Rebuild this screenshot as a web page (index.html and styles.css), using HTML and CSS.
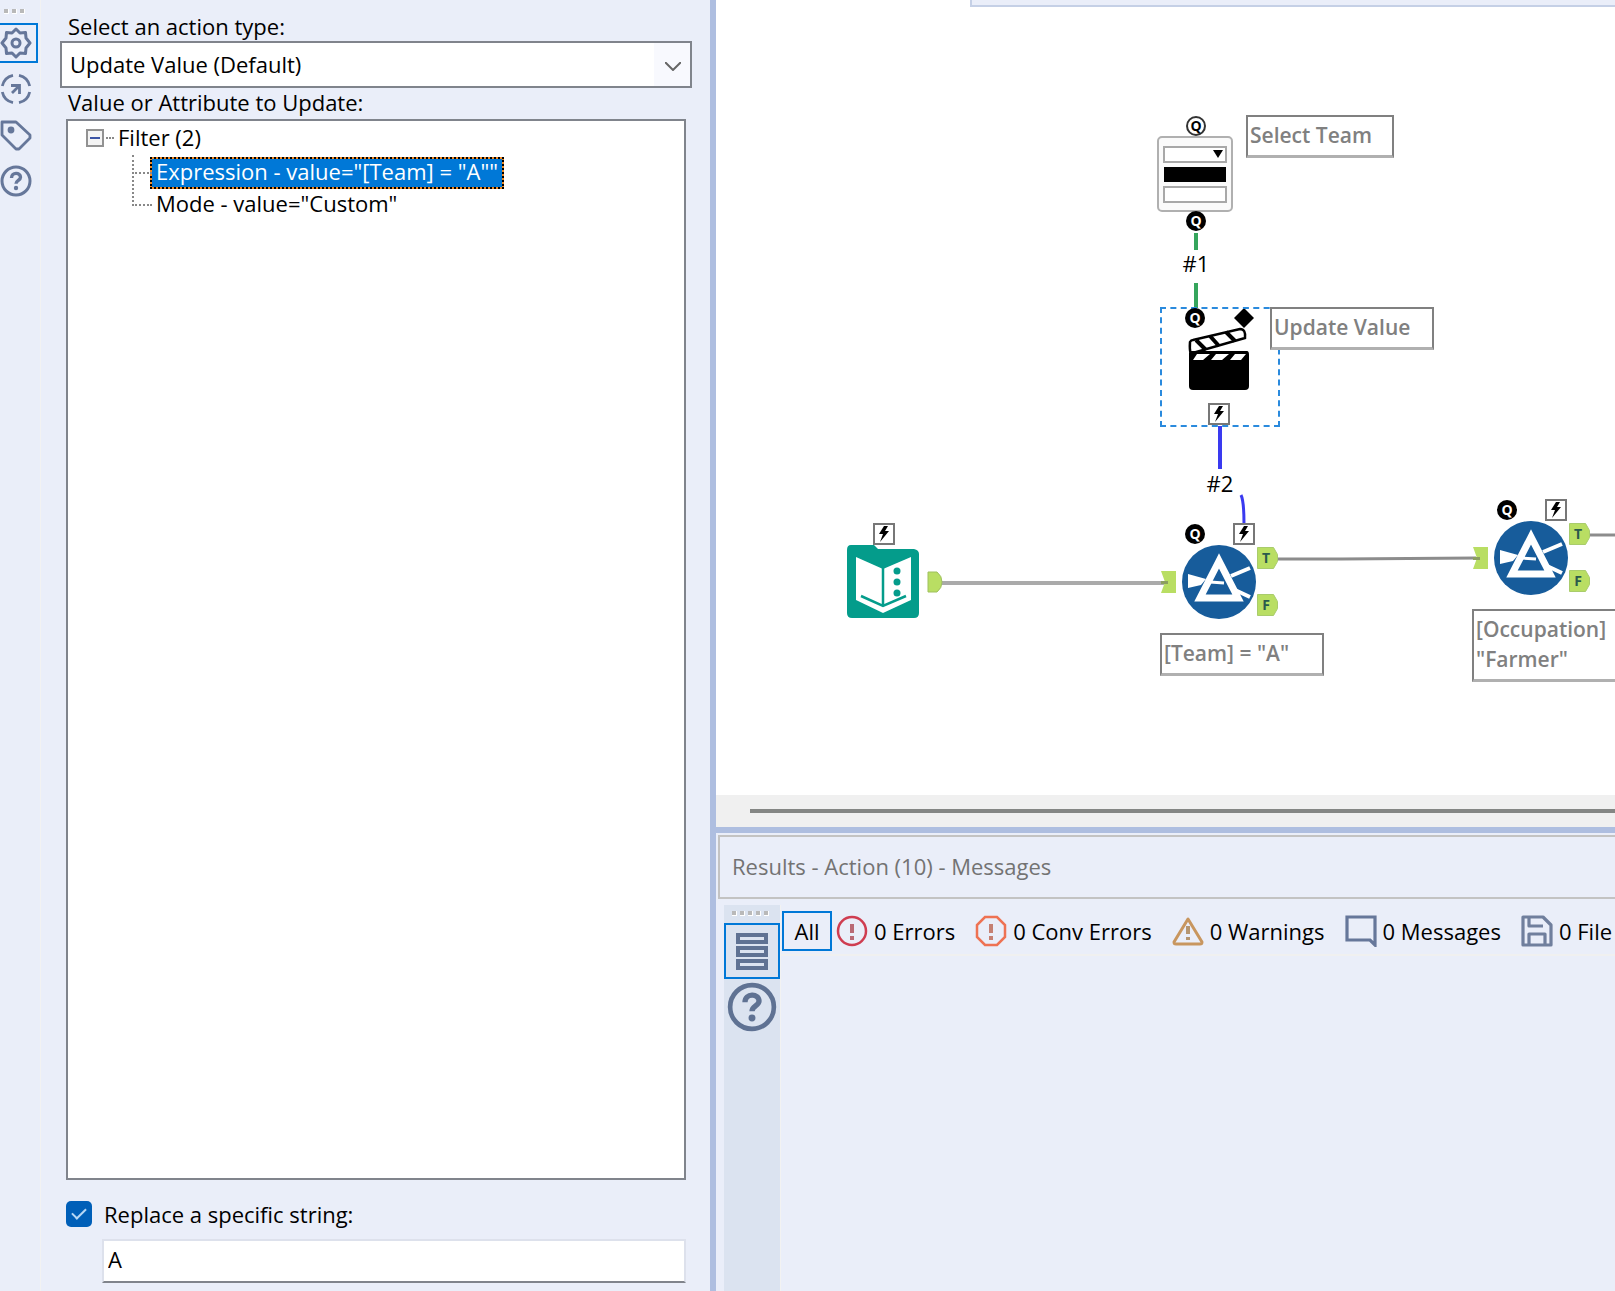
FILE: index.html
```html
<!DOCTYPE html>
<html lang="en">
<head>
<meta charset="utf-8">
<meta name="viewport" content="width=device-width, initial-scale=1">
<title>Workflow designer</title>
<link rel="stylesheet" href="styles.css">
</head>
<body>
<svg class="defs" aria-hidden="true">
  <symbol id="bolt" viewBox="0 0 22 22">
    <rect x="1" y="1" width="20" height="20" fill="#fff" stroke="#777" stroke-width="2"/>
    <path d="M11 3h4l-3 5h4l-9 11 3-8H6z" fill="#000"/>
  </symbol>
  <symbol id="in" viewBox="0 0 15 22">
    <path d="M0 0h15v22H0l4-11z" fill="#b9de63"/>
    <path d="M0 10h7v3H0z" fill="#8b9e60"/>
  </symbol>
  <symbol id="out" viewBox="0 0 21 22">
    <path d="M.5 .5h16l4 7v7l-4 7H.5z" fill="#b9de63" stroke="#a9cc6c"/>
  </symbol>
  <symbol id="prism" viewBox="0 0 74 74">
    <circle cx="37" cy="37" r="37" fill="#175c9b"/>
    <path d="M6 29l18 5-5 6-13 3z" fill="#fff"/>
    <path d="M49 31l19-8M53 45l15 7" stroke="#fff" stroke-width="4" fill="none"/>
    <path d="M37 16L18 53h38z" fill="none" stroke="#fff" stroke-width="7"/>
    <path d="M28 37l14 1" stroke="#fff" stroke-width="3"/>
  </symbol>
  <symbol id="help" viewBox="0 0 32 32">
    <circle cx="16" cy="16" r="14" fill="none" stroke="currentColor" stroke-width="3"/>
    <path d="M11.500 13c0-6 9-6 9-.8 0 3-4.500 3.300-4.500 6.500" fill="none" stroke="currentColor" stroke-width="3.400"/>
    <circle cx="16" cy="23" r="2.200" fill="currentColor"/>
  </symbol>
</svg>

<div class="app">
  <aside class="dock">
    <nav class="rail" aria-label="Configuration views">
      <span class="grip"><i></i><i></i><i></i></span>
      <button class="rail-btn is-active" aria-label="Configuration">
        <svg viewBox="0 0 32 32"><path d="M16 2l4 4 5.500-.5.500 5.500 4 5-4 5-.5 5.500-5.500-.5-4 4-4-4-5.500.5L6 21l-4-5 4-5 .5-5.500L12 6z" fill="none" stroke="currentColor" stroke-width="3" stroke-linejoin="round"/><circle cx="16" cy="16" r="4" fill="none" stroke="currentColor" stroke-width="3"/></svg>
      </button>
      <button class="rail-btn" aria-label="Navigation">
        <svg viewBox="0 0 32 32"><path d="M19 2.300A14 14 0 0 1 29.700 13M29.700 19A14 14 0 0 1 19 29.700M13 29.700A14 14 0 0 1 2.300 19M2.300 13A14 14 0 0 1 13 2.300M11 12.500h8.500V21M19 13L12 20" fill="none" stroke="currentColor" stroke-width="2.800"/></svg>
      </button>
      <button class="rail-btn" aria-label="Annotation">
        <svg viewBox="0 0 32 32"><path d="M2 3h14l14 13v3L19 30h-3L2 16z" fill="none" stroke="currentColor" stroke-width="2.800" stroke-linejoin="round"/><circle cx="11" cy="11" r="3.400" fill="currentColor"/></svg>
      </button>
      <button class="rail-btn" aria-label="Help"><svg><use href="#help"/></svg></button>
    </nav>
    <section class="config">
      <label class="field-label" for="action">Select an action type:</label>
      <div class="combo">
        <select id="action"><option>Update Value (Default)</option></select>
        <span class="combo-arrow"><svg viewBox="0 0 16 9"><path d="M0 0l8 8 8-8" fill="none" stroke="#666" stroke-width="2"/></svg></span>
      </div>
      <p class="field-label" id="tree-label">Value or Attribute to Update:</p>
      <div class="tree" role="tree" aria-labelledby="tree-label">
        <div class="tree-root" role="treeitem" aria-expanded="true"><button class="toggle" aria-label="Collapse"></button><span>Filter (2)</span></div>
        <div class="tree-children" role="group">
          <div class="tree-item" role="treeitem" aria-selected="true"><span class="tree-text is-selected">Expression - value="[Team] = "A""</span></div>
          <div class="tree-item" role="treeitem"><span class="tree-text">Mode - value="Custom"</span></div>
        </div>
      </div>
      <label class="check"><input type="checkbox" checked>Replace a specific string:</label>
      <input class="text" type="text" value="A" aria-label="String to replace">
    </section>
  </aside>

  <main class="work">
    <div class="canvas">
      <div class="tabs"></div>
      <svg class="wires" width="900" height="700" aria-hidden="true">
        <g fill="none">
          <path d="M226 583H448" stroke="#aaa" stroke-width="4"/>
          <path d="M561 559H625L760 558" stroke="#8c8c8c" stroke-width="3"/>
          <path d="M873 535H900" stroke="#8c8c8c" stroke-width="3"/>
          <path d="M480 233V250M480 283V308" stroke="#35a55c" stroke-width="4"/>
          <path d="M504 426V469" stroke="#3a3af0" stroke-width="4"/>
          <path d="M525 495Q528 501 528 524" stroke="#3a3af0" stroke-width="3"/>
        </g>
      </svg>
      <span class="wire-tag tag-1">#1</span>
      <span class="wire-tag tag-2">#2</span>

      <div class="node node-list">
        <svg width="76" height="76" viewBox="0 0 76 76">
          <rect x="1" y="1" width="74" height="74" rx="4" fill="#fafafa" stroke="#b0b0b0" stroke-width="2"/>
          <rect x="7" y="11" width="62" height="15" fill="#fff" stroke="#a8a8a8" stroke-width="2"/>
          <path d="M56 14h10l-5 8z"/>
          <path d="M7 31h62v15H7z"/>
          <rect x="7" y="51" width="62" height="15" fill="#fff" stroke="#a8a8a8" stroke-width="2"/>
        </svg>
        <span class="q q-open q-top">Q</span>
        <span class="q q-bottom">Q</span>
      </div>
      <div class="note note-list">Select Team</div>

      <div class="node node-action">
        <span class="q q-action">Q</span>
        <svg width="119" height="119" viewBox="0 0 119 119">
          <path d="M84 1l10 10-10 10-10-10z"/>
          <path d="M30 35q1-2 3-2L80 22q6 0 5 9L36 45l-2 6q-5-2-4-16z" fill="#fff" stroke="#000" stroke-width="2.500"/>
          <path d="M36 33l10 10M50 29l9 10M66 25l9 9" stroke="#000" stroke-width="4"/>
          <path d="M31 44h56q2 0 2 4v31q0 4-4 4H33q-4 0-4-4V46z"/>
          <path d="M37 47h13l-7 6H33zM56 47h13l-7 6H51zM75 47h11l-5 6H70z" fill="#fff"/>
          <use href="#bolt" x="48" y="96" width="22" height="22"/>
        </svg>
      </div>
      <div class="note note-action">Update Value</div>

      <div class="node node-input">
        <svg width="96" height="95" viewBox="0 0 96 95">
          <use href="#bolt" x="26" y="0" width="22" height="22"/>
          <path d="M4 22h23l4 4h36q5 1 5 5v59q0 5-5 5H5q-5 0-5-5V27q0-5 4-5z" fill="#049c8b"/>
          <path d="M9 34l27 12 28-12v43L36 90 9 77z" fill="#fff"/>
          <path d="M36 45v38M14 73l22 10 23-10" fill="none" stroke="#049c8b" stroke-width="2.500"/>
          <g fill="#049c8b"><circle cx="50" cy="48" r="3.500"/><circle cx="50" cy="59" r="3.500"/><circle cx="50" cy="70" r="3.500"/></g>
          <path d="M81 49h9q5 4 5 10t-5 10h-9z" fill="#b9de63" stroke="#9fc05f"/>
        </svg>
      </div>

      <div class="node filter filter-team">
        <svg width="118" height="96" viewBox="0 0 118 96">
          <use href="#bolt" x="73" y="0" width="22" height="22"/>
          <use href="#in" x="1" y="48" width="15" height="22"/>
          <use href="#prism" x="22" y="22" width="74" height="74"/>
          <use href="#out" x="97" y="24" width="21" height="22"/>
          <use href="#out" x="97" y="71" width="21" height="22"/>
        </svg>
        <span class="q q-filter">Q</span><b class="port port-t">T</b><b class="port port-f">F</b>
      </div>
      <div class="note note-team">[Team] = "A"</div>

      <div class="node filter filter-job">
        <svg width="118" height="96" viewBox="0 0 118 96">
          <use href="#bolt" x="73" y="0" width="22" height="22"/>
          <use href="#in" x="1" y="48" width="15" height="22"/>
          <use href="#prism" x="22" y="22" width="74" height="74"/>
          <use href="#out" x="97" y="24" width="21" height="22"/>
          <use href="#out" x="97" y="71" width="21" height="22"/>
        </svg>
        <span class="q q-filter">Q</span><b class="port port-t">T</b><b class="port port-f">F</b>
      </div>
      <div class="note note-job">[Occupation]<br>"Farmer"</div>
    </div>
    <div class="scroll"><span class="thumb"></span></div>

    <section class="results">
      <h2 class="results-title">Results - Action (10) - Messages</h2>
      <div class="results-body">
        <nav class="side" aria-label="Results views">
          <span class="grip"><i></i><i></i><i></i><i></i><i></i></span>
          <button class="side-btn is-active" aria-label="Messages">
            <svg width="32" height="38" viewBox="0 0 32 38"><path d="M2 3h28v7H2zM2 16h28v7H2zM2 29h28v7H2z" fill="none" stroke="currentColor" stroke-width="4"/></svg>
          </button>
          <button class="side-btn" aria-label="Help"><svg width="50" height="50"><use href="#help"/></svg></button>
        </nav>
        <div class="messages">
          <div class="filters">
            <button class="all">All</button>
            <button class="stat"><svg viewBox="0 0 32 32"><circle cx="16" cy="16" r="14" fill="none" stroke="#cf3d51" stroke-width="2.500"/><path d="M16 9v9M16 21v4" stroke="#b96a75" stroke-width="4"/></svg>0 Errors</button>
            <button class="stat"><svg viewBox="0 0 32 32"><path d="M10 2h12l8 8v12l-8 8H10l-8-8V10z" fill="none" stroke="#ee7253" stroke-width="2.500"/><path d="M16 9v9M16 21v4" stroke="#c58072" stroke-width="4"/></svg>0 Conv Errors</button>
            <button class="stat"><svg viewBox="0 0 32 32"><path d="M16 4L2 27q0 2 2 2h24q2 0 2-2z" fill="none" stroke="#c8965f" stroke-width="3" stroke-linejoin="round"/><path d="M16 11v8M16 22v3" stroke="#b59570" stroke-width="4"/></svg>0 Warnings</button>
            <button class="stat"><svg viewBox="0 0 32 32"><path d="M2 2h28v28l-5-5H2z" fill="none" stroke="#66779a" stroke-width="3.200"/></svg>0 Messages</button>
            <button class="stat"><svg viewBox="0 0 32 32"><path d="M2 2h20l8 8v20H2zM8 30V19h16v11M8 2v9h14" fill="none" stroke="#707f9d" stroke-width="3.200" stroke-linejoin="round"/></svg>0 File</button>
          </div>
        </div>
      </div>
    </section>
  </main>
</div>
</body>
</html>
```
FILE: styles.css
```css
* { box-sizing: border-box; }

body {
  margin: 0;
  background: #eaeef9;
  color: #000;
  font: 22px/28px "Open Sans", "Noto Sans", sans-serif;
}

button, input, select { font: inherit; color: inherit; }
button { margin: 0; padding: 0; border: 0; background: none; }
svg { display: block; }
.defs { position: absolute; width: 0; height: 0; }

.app { display: flex; height: 100vh; overflow: hidden; }

/* Configuration dock */
.dock { flex: 0 0 716px; display: flex; border-right: 6px solid #aebee0; }
.rail {
  flex: 0 0 41px;
  display: flex;
  flex-direction: column;
  align-items: flex-start;
  gap: 6px;
  padding-top: 9px;
  border-right: 1px solid #f2f2f2;
  color: #66779a;
}
.grip { display: flex; gap: 3px; height: 8px; padding-left: 4px; }
.grip i { width: 5px; height: 5px; background: #b9b9b9; border-right: 1px solid #fff; border-bottom: 1px solid #fff; }
.rail-btn { width: 38px; height: 40px; border: 2px solid transparent; border-left: 0; }
.rail-btn svg { width: 32px; height: 32px; }
.is-active { border-color: #0078d7; }

.config { flex: 1; display: flex; flex-direction: column; padding: 12px 24px 8px 25px; }
.field-label { margin: 0; padding-left: 2px; }
.combo { position: relative; margin: 1px -6px 0; }
.combo select {
  display: block;
  width: 100%;
  height: 47px;
  padding: 0 8px 2px;
  border: 2px solid #80848c;
  border-radius: 0;
  background: #fff;
  appearance: none;
}
.combo-arrow { position: absolute; top: 2px; right: 2px; bottom: 2px; width: 36px; padding: 19px 8px 0 11px; background: #f8f9fe; pointer-events: none; }
.combo-arrow svg { width: 16px; height: 9px; }

.tree { flex: 1; margin-top: 3px; border: 2px solid #80848c; background: #fff; line-height: 32px; }
.tree-root { display: flex; align-items: center; height: 34px; padding-left: 18px; }
.tree-root span { height: 34px; }
.toggle { position: relative; width: 18px; height: 18px; margin-right: 14px; border: 2px solid #929292; background: #f4f4f4; }
.toggle::before { content: ""; position: absolute; left: 2px; top: 6px; width: 10px; height: 2px; background: #3c55a5; }
.toggle::after { content: ""; position: absolute; left: 18px; top: 6px; width: 8px; border-top: 2px dotted #888; }
.tree-children { padding-left: 64px; }
.tree-item { position: relative; height: 32px; padding-left: 18px; }
.tree-item::before { content: ""; position: absolute; left: 0; top: 0; width: 18px; height: 17px; border-left: 2px dotted #888; border-bottom: 2px dotted #888; }
.tree-item + .tree-item::before { top: -15px; height: 32px; }
.tree-text { display: inline-block; height: 32px; padding: 0 4px; line-height: 24px; border: 2px solid transparent; }
.is-selected {
  color: #fff;
  border: 2px dotted #000;
  background: linear-gradient(#0078d7, #0078d7) padding-box, #f08a24 border-box;
}

.check { display: flex; align-items: center; gap: 12px; margin: 20px 0 11px; }
.check input {
  appearance: none;
  width: 26px;
  height: 26px;
  margin: 0;
  border-radius: 5px;
  background: #005fb8;
  display: grid;
  place-items: center;
}
.check input:checked::before { content: ""; width: 6px; height: 12px; margin-top: -4px; border: solid #b8d8f5; border-width: 0 2px 2px 0; transform: rotate(45deg); }
.text { height: 44px; margin-left: 36px; padding: 0 4px 5px; border: 2px solid #dde1ec; border-bottom-color: #80848c; background: #fff; }

/* Workflow canvas */
.work { flex: 1; min-width: 0; display: flex; flex-direction: column; }
.canvas { flex: 1; position: relative; min-height: 0; overflow: hidden; background: #fff; }
.tabs { height: 7px; margin-left: 254px; border-left: 2px solid #c5d0e6; border-bottom: 2px solid #c5d0e6; background: #eaeef9; }
.wires, .node, .note, .wire-tag, .q, .port { position: absolute; }
.wires { left: 0; top: 0; }
.wire-tag { width: 40px; text-align: center; }
.tag-1 { left: 460px; top: 249px; }
.tag-2 { left: 484px; top: 469px; }

.node-list { left: 441px; top: 136px; }
.node-action { left: 444px; top: 307px; width: 120px; height: 120px; outline: 2px dashed #2a8add; outline-offset: -2px; }
.node-input { left: 131px; top: 523px; }
.filter-team { left: 444px; top: 523px; }
.filter-job { left: 756px; top: 499px; }

.q { width: 20px; height: 20px; border-radius: 50%; background: #000; color: #fff; font-size: 14px; font-weight: 700; line-height: 19px; text-align: center; }
.q-open { background: #fff; color: #000; border: 2px solid #333; line-height: 15px; }
.q-top { left: 29px; top: -20px; }
.q-bottom { left: 29px; top: 75px; }
.q-action { left: 25px; top: 1px; }
.q-filter { left: 25px; top: 1px; }
.port { left: 97px; width: 18px; font-size: 14px; line-height: 22px; text-align: center; color: #2b5a4c; }
.port-t { top: 24px; }
.port-f { top: 71px; }

.note {
  padding: 3px 2px 5px;
  border: 2px solid #808080;
  border-bottom: 3px solid #b0b0b0;
  background: #fff;
  color: #808080;
  font-weight: 600;
  font-size: 21px;
  line-height: 30px;
  white-space: nowrap;
}
.note-list { left: 530px; top: 115px; width: 148px; }
.note-action { left: 554px; top: 307px; width: 164px; }
.note-team { left: 444px; top: 633px; width: 164px; }
.note-job { left: 756px; top: 609px; width: 164px; }

.scroll { flex: 0 0 32px; padding: 14px 0 0 34px; background: #f0f0f0; }
.thumb { display: block; height: 4px; background: #848684; }

/* Results pane */
.results { flex: 0 0 464px; display: flex; flex-direction: column; border-top: 6px solid #aebee0; }
.results-title { margin: 2px 0 6px 2px; padding: 15px 12px 17px; border: 2px solid #c3c3c3; border-right: 0; color: #737373; font-size: 22px; font-weight: 400; line-height: 28px; }
.results-body { flex: 1; display: flex; padding-left: 8px; }
.side { flex: 0 0 57px; display: flex; flex-direction: column; border-right: 1px solid #f2f2f2; background: #dbe3f0; color: #5f7293; }
.side .grip { height: 18px; padding: 6px 0 0 8px; }
.side-btn { display: grid; place-items: center; width: 56px; height: 56px; }
.side-btn.is-active { border: 2px solid #0078d7; }
.messages { flex: 1; min-width: 0; overflow: hidden; }
.filters { display: flex; height: 51px; padding: 6px 0 3px 1px; border-bottom: 2px solid #f0f0f0; }
.all { flex: none; width: 50px; height: 40px; border: 2px solid #0078d7; }
.stat { flex: none; display: flex; align-items: center; height: 40px; gap: 6px; margin: 0 16px 0 4px; white-space: nowrap; }
.stat svg { width: 32px; height: 32px; }
```
